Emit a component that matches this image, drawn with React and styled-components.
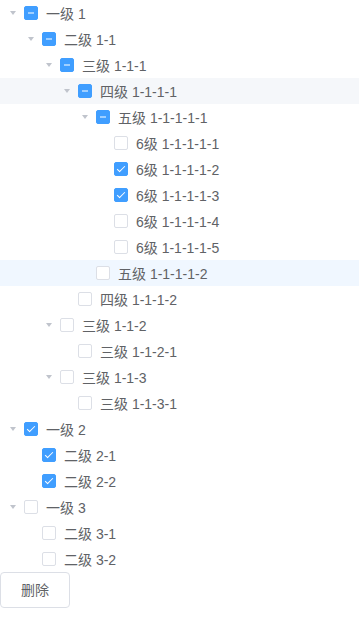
import React from "react";
import styled, { createGlobalStyle, css } from "styled-components";

const GlobalStyle = createGlobalStyle`
  html, body {
    margin: 0;
    padding: 0;
    background: #fff;
  }
  body {
    font-family: "Liberation Sans", "Noto Sans CJK SC", sans-serif;
    color: #606266;
  }
`;

// state: "on" | "half" | "off"
const data = [
  { label: "一级 1", state: "half", children: [
    { label: "二级 1-1", state: "half", children: [
      { label: "三级 1-1-1", state: "half", children: [
        { label: "四级 1-1-1-1", state: "half", hover: true, children: [
          { label: "五级 1-1-1-1-1", state: "half", children: [
            { label: "6级 1-1-1-1-1", state: "off" },
            { label: "6级 1-1-1-1-2", state: "on" },
            { label: "6级 1-1-1-1-3", state: "on" },
            { label: "6级 1-1-1-1-4", state: "off" },
            { label: "6级 1-1-1-1-5", state: "off" },
          ] },
          { label: "五级 1-1-1-1-2", state: "off", current: true },
        ] },
        { label: "四级 1-1-1-2", state: "off" },
      ] },
      { label: "三级 1-1-2", state: "off", children: [
        { label: "三级 1-1-2-1", state: "off" },
      ] },
      { label: "三级 1-1-3", state: "off", children: [
        { label: "三级 1-1-3-1", state: "off" },
      ] },
    ] },
  ] },
  { label: "一级 2", state: "on", children: [
    { label: "二级 2-1", state: "on" },
    { label: "二级 2-2", state: "on" },
  ] },
  { label: "一级 3", state: "off", children: [
    { label: "二级 3-1", state: "off" },
    { label: "二级 3-2", state: "off" },
  ] },
];

const Tree = styled.div`
  background: #fff;
  font-size: 14px;
`;

const NodeRow = styled.div`
  display: flex;
  align-items: center;
  height: 26px;
  padding-left: ${(p) => p.level * 18}px;
  background: ${(p) => (p.current ? "#f0f7ff" : p.hover ? "#f5f7fa" : "transparent")};
`;

const Caret = styled.span`
  width: 24px;
  height: 26px;
  display: flex;
  align-items: center;
  justify-content: center;
  flex-shrink: 0;
  &::after {
    content: "";
    display: ${(p) => (p.leaf ? "none" : "block")};
    width: 0;
    height: 0;
    border-left: 3.5px solid transparent;
    border-right: 3.5px solid transparent;
    border-top: 4px solid #c0c4cc;
    margin-left: 1px;
  }
`;

const Box = styled.span`
  position: relative;
  box-sizing: border-box;
  width: 14px;
  height: 14px;
  border: 1px solid #dcdfe6;
  border-radius: 2px;
  background: #fff;
  margin-right: 8px;
  flex-shrink: 0;
  ${(p) =>
    p.state !== "off" &&
    css`
      background: #409eff;
      border-color: #409eff;
    `}
  ${(p) =>
    p.state === "on" &&
    css`
      &::after {
        content: "";
        position: absolute;
        box-sizing: content-box;
        left: 4px;
        top: 1px;
        width: 3px;
        height: 7px;
        border: 1px solid #fff;
        border-left: 0;
        border-top: 0;
        transform: rotate(45deg) scaleY(1);
      }
    `}
  ${(p) =>
    p.state === "half" &&
    css`
      &::before {
        content: "";
        position: absolute;
        left: 0;
        right: 0;
        top: 5px;
        height: 2px;
        background: #fff;
        transform: scale(0.5);
      }
    `}
`;

const Label = styled.span`
  font-size: 14px;
  color: #606266;
  white-space: nowrap;
`;

const Button = styled.button`
  box-sizing: border-box;
  height: 36px;
  padding: 0 20px;
  font-family: inherit;
  font-size: 14px;
  color: #606266;
  background: #fff;
  border: 1px solid #dcdfe6;
  border-radius: 4px;
  line-height: 1;
`;

const TreeNode = ({ node, level }) => (
  <>
    <NodeRow level={level} hover={node.hover} current={node.current}>
      <Caret leaf={!node.children} />
      <Box state={node.state} />
      <Label>{node.label}</Label>
    </NodeRow>
    {node.children &&
      node.children.map((child) => (
        <TreeNode key={child.label} node={child} level={level + 1} />
      ))}
  </>
);

const App = () => {
  return (
    <>
      <GlobalStyle />
      <Tree>
        {data.map((node) => (
          <TreeNode key={node.label} node={node} level={0} />
        ))}
      </Tree>
      <Button type="button">删除</Button>
    </>
  );
};

export default App;
